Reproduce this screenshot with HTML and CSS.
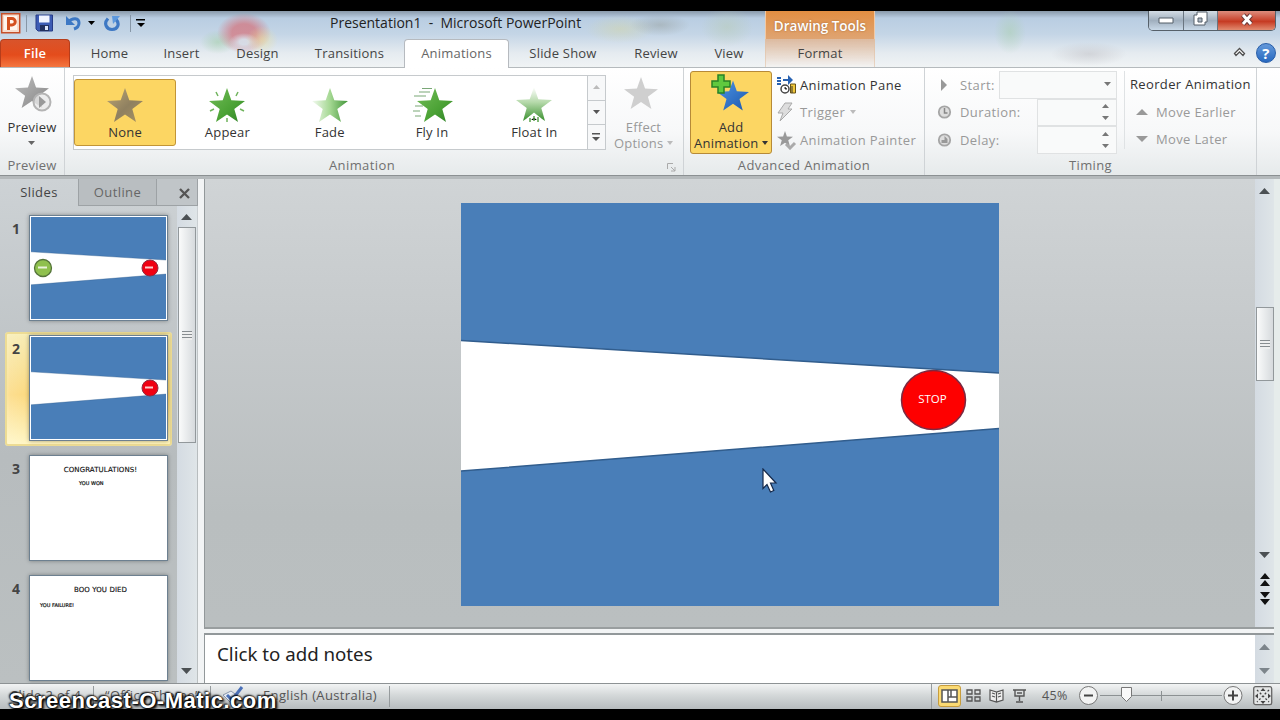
FILE: index.html
```
<!DOCTYPE html>
<html lang="en">
    <head>
        <meta charset="UTF-8">
        <meta name="viewport" content="width=device-width, initial-scale=1.0">
        <title>Presentation1 - Microsoft PowerPoint</title>
        <link rel="stylesheet" href="styles.css">
    </head>
    <body>
        <!-- Shared gradients and shapes -->
        <svg class="defs" width="0" height="0">
            <defs>
                <linearGradient id="gray" x1="0" y1="0" x2="1" y2="1"><stop offset="0" stop-color="#bdbdbd"/><stop offset="1" stop-color="#858585"/></linearGradient>
                <linearGradient id="brown" x1="0" y1="0" x2="1" y2="1"><stop offset="0" stop-color="#bfa873"/><stop offset=".55" stop-color="#8f8060"/><stop offset="1" stop-color="#aa9461"/></linearGradient>
                <linearGradient id="green" x1="0" y1="0" x2="1" y2="1"><stop offset="0" stop-color="#74bd59"/><stop offset=".6" stop-color="#4ba235"/><stop offset="1" stop-color="#2f8128"/></linearGradient>
                <linearGradient id="fade" x1="0" y1="0" x2="1" y2="0"><stop offset="0" stop-color="#f3faf0"/><stop offset=".5" stop-color="#a5d893"/><stop offset="1" stop-color="#43963a"/></linearGradient>
                <linearGradient id="float" x1="0" y1="0" x2="0" y2="1"><stop offset="0" stop-color="#fff"/><stop offset=".45" stop-color="#b5d9aa"/><stop offset="1" stop-color="#3b9130"/></linearGradient>
                <linearGradient id="blue" x1="0" y1="0" x2="1" y2="1"><stop offset="0" stop-color="#4d95e6"/><stop offset="1" stop-color="#1d58ad"/></linearGradient>
                <symbol id="star" viewBox="0 0 36 34"><path d="M18 0l4.3 12.3L36 13 25.3 21 29 34l-11-7.6L7 34l3.7-13L0 13l13.700-.7z"/></symbol>
                <symbol id="slide-art" viewBox="0 0 538 403" preserveAspectRatio="none">
                    <path fill="#497eb8" d="M0 0h538v403H0z"/>
                    <path fill="#fff" d="M0 137.500L538 170v55.500L0 268z"/>
                    <path fill="none" stroke="#315d8d" stroke-width="1.500" d="M0 137.500L538 170M0 268l538-42.500"/>
                </symbol>
            </defs>
        </svg>

        <div class="application">
            <div class="header">
                <div class="titlebar">
                    <div class="quick-access">
                        <svg class="logo" width="21" height="21" viewBox="-1 0 21 21"><path fill="#f6dccd" stroke="#c6502a" stroke-width="1.500" d="M.700.700h18v19H.700z"/><path fill="#fff5ee" d="M3 3h13v14H3z"/><path fill="none" stroke="#d4501f" stroke-width="3" d="M7.500 17V5.500H11a3 3 0 010 6.500H8"/></svg>
                        <span class="bar"></span>
                        <svg class="save" width="19" height="18" viewBox="0 0 19 18"><path fill="#3c5cb4" stroke="#263c87" d="M1 1h16.500v16H3l-2-2z"/><path fill="#f1f5ff" d="M4 1.500h10.500v7H4z"/><path fill="#22305e" d="M5 11h9v6H5z"/><path fill="#dbe4f7" d="M10 12h3v4h-3z"/></svg>
                        <svg class="undo" width="17" height="16" viewBox="0 0 17 16"><path fill="none" stroke="#3d78c4" stroke-width="3" d="M3 7c5-5 11-4 11 1 0 3-2 5-5 6"/><path fill="#3d78c4" d="M1 1v9h9z"/></svg>
                        <svg class="caret" width="8" height="5"><path d="M0 0h7L3.500 4z"/></svg>
                        <svg class="redo" width="17" height="17" viewBox="0 0 17 17"><path fill="none" stroke="#3d78c4" stroke-width="3.200" d="M4 3.500C-1 9 3 14.500 8 14.500c6 0 8-6 4-10"/><path fill="#5c98dd" d="M8 1h8L9 9z"/></svg>
                        <span class="bar"></span>
                        <svg class="more" width="10" height="8"><path d="M0 0h9v1.500H0zM1 4h8L5 8z"/></svg>
                    </div>
                    <div class="window-title">Presentation1&nbsp; -&nbsp; Microsoft PowerPoint</div>
                    <div class="tool-title">Drawing Tools</div>
                    <div class="window-buttons">
                        <span class="minimize"><svg width="17" height="8"><path fill="#fff" stroke="#555e69" d="M1 1h14v5H1z"/></svg></span>
                        <span class="restore"><svg width="16" height="16"><path fill="#fff" stroke="#555e69" d="M4 1h10v10h-2v3H1V4h3z"/><path fill="#aeb9c5" stroke="#555e69" d="M5 7h4v4H5z"/></svg></span>
                        <span class="close"><svg width="14" height="13" viewBox="0 0 14 13"><path stroke="#6b3a38" stroke-width="5" d="M3 2l8 9M11 2l-8 9"/><path stroke="#fff" stroke-width="3" d="M3 2l8 9M11 2l-8 9"/></svg></span>
                    </div>
                </div>
                <div class="tabs">
                    <div class="tab file">File</div>
                    <div class="tab home">Home</div>
                    <div class="tab insert">Insert</div>
                    <div class="tab design">Design</div>
                    <div class="tab transitions">Transitions</div>
                    <div class="tab active">Animations</div>
                    <div class="tab slideshow">Slide Show</div>
                    <div class="tab review">Review</div>
                    <div class="tab view">View</div>
                    <div class="tab format">Format</div>
                    <div class="help">
                        <svg width="13" height="11"><path fill="#fff" stroke="#505050" stroke-width="1.300" d="M1.500 6.500l5-5 5 5-1.500 2-3.500-3.500L3 8.500z"/></svg>
                        <span class="help-icon">?</span>
                    </div>
                </div>
            </div>

            <div class="ribbon">
                <div class="group group-preview">
                    <div class="group-content">
                        <div class="big-button">
                            <svg width="42" height="38" viewBox="0 0 42 38"><use href="#star" x="4" y="0" width="34" height="34" fill="url(#gray)"/><circle cx="31" cy="27" r="8.500" fill="#e9e9e9" fill-opacity=".8" stroke="#b4b4b4" stroke-width="2"/><path fill="#999" d="M28 21l7 6-7 6z"/></svg>
                            <span>Preview</span>
                            <svg class="drop" width="8" height="5"><path d="M0 0h7L3.500 4z"/></svg>
                        </div>
                    </div>
                    <div class="group-label">Preview</div>
                </div>

                <div class="group group-animation">
                    <div class="group-content">
                        <div class="gallery">
                            <div class="effect selected"><svg width="52" height="38"><use href="#star" x="8" y="2" width="36" height="34" fill="url(#brown)"/></svg>None</div>
                            <div class="effect"><svg width="52" height="38"><use href="#star" x="8" y="2" width="36" height="34" fill="url(#green)"/><path stroke="#70b45d" stroke-width="1.500" d="M15 6l2 4M37 6l-2 4M9 25l4-2M43 25l-4-2M26 32v4"/></svg>Appear</div>
                            <div class="effect"><svg width="52" height="38"><use href="#star" x="8" y="2" width="36" height="34" fill="url(#fade)"/></svg>Fade</div>
                            <div class="effect"><svg width="52" height="38"><use href="#star" x="11" y="2" width="36" height="34" fill="url(#green)"/><path stroke="#7aa777" stroke-width="1.200" d="M16 2.500h10M13 6h11M8 10h12M9 20h8M7 25h7M9 30h6"/></svg>Fly In</div>
                            <div class="effect"><svg width="52" height="38"><use href="#star" x="8" y="1" width="36" height="34" fill="url(#float)"/><path stroke="#fff" stroke-width="4" d="M20 34l6-5 6 5"/><path stroke="#5ba34d" stroke-width="1.500" d="M22 32v4M26 30v5M30 31v5"/></svg>Float In</div>
                            <div class="gallery-scroll">
                                <span class="disabled"><svg width="8" height="5"><path d="M0 4h7L3.500 0z"/></svg></span>
                                <span><svg width="8" height="5"><path d="M0 0h7L3.500 4z"/></svg></span>
                                <span><svg width="9" height="9"><path d="M0 0h8v1.500H0zM0 4h8L4 8z"/></svg></span>
                            </div>
                        </div>
                        <div class="big-button effect-options">
                            <svg width="36" height="34" fill="#cfcfcf"><use href="#star" width="34" height="34"/></svg>
                            <span>Effect<br>Options <i class="arrow"></i></span>
                        </div>
                    </div>
                    <div class="group-label">Animation
                        <svg class="launcher" width="9" height="9"><path fill="none" stroke="#aaa" d="M.500 6V.500H6M4 4l4 4M8 4v4H4"/></svg>
                    </div>
                </div>

                <div class="group group-advanced">
                    <div class="group-content">
                        <div class="big-button add-animation">
                            <svg width="40" height="40"><use href="#star" x="6" y="5" width="32" height="33" fill="url(#blue)"/><path fill="#5fc93e" stroke="#278226" stroke-width="1.500" d="M7 1h6v6h6v6h-6v6H7v-6H1V7h6z"/></svg>
                            <span>Add<br>Animation <i class="arrow"></i></span>
                        </div>
                        <div class="commands">
                            <div class="command">
                                <svg width="20" height="20"><path stroke="#2862b2" stroke-width="2" d="M0 3h4M0 6h4M0 9h4M6 5h8"/><path fill="#2862b2" d="M11 0l5 5-5 5z"/><circle cx="8" cy="14" r="4" fill="#fff" stroke="#444" stroke-width="1.500"/><path fill="#f1c83a" stroke="#695314" d="M13.500 9h5v9h-5z"/><path stroke="#333" d="M8 12v2h2M15 18v-7"/></svg>
                                Animation Pane
                            </div>
                            <div class="command disabled">
                                <svg width="20" height="20"><path fill="#ddd" stroke="#aaa" d="M8 1h7l-4 6h4L3 19l3-8H1z"/></svg>
                                Trigger <i class="arrow"></i>
                            </div>
                            <div class="command disabled">
                                <svg width="20" height="20"><use href="#star" width="16" height="17" fill="#999"/><path fill="none" stroke="#aaa" stroke-width="3" d="M9 14l4 4 5-5"/></svg>
                                Animation Painter
                            </div>
                        </div>
                    </div>
                    <div class="group-label">Advanced Animation</div>
                </div>

                <div class="group group-timing">
                    <div class="group-content">
                        <div class="timing">
                            <div class="timing-row"><svg width="23" height="16"><path fill="#999" d="M4 2l6 6-6 6z"/></svg><span>Start:</span><div class="field start"><svg width="8" height="5"><path d="M0 0h7L3.500 4z"/></svg></div></div>
                            <div class="timing-row"><svg width="23" height="16"><circle cx="7.500" cy="8" r="5.700" fill="#ddd" stroke="#a5a5a5" stroke-width="1.800"/><path fill="none" stroke="#888" stroke-width="1.500" d="M7.500 4v5h3"/></svg><span>Duration:</span><div class="field spin"><svg width="8" height="16"><path d="M0 4h7L3.500 0zM0 12h7L3.500 16z"/></svg></div></div>
                            <div class="timing-row"><svg width="23" height="16"><circle cx="7.500" cy="8" r="5.700" fill="#ddd" stroke="#a5a5a5" stroke-width="1.800"/><path fill="#999" d="M7.500 4v4h-3v3h6V7z"/></svg><span>Delay:</span><div class="field spin"><svg width="8" height="16"><path d="M0 4h7L3.500 0zM0 12h7L3.500 16z"/></svg></div></div>
                        </div>
                        <div class="reorder">
                            <div>Reorder Animation</div>
                            <div class="disabled"><svg width="12" height="7"><path d="M0 6h12L6 0z"/></svg>Move Earlier</div>
                            <div class="disabled"><svg width="12" height="7"><path d="M0 0h12L6 6z"/></svg>Move Later</div>
                        </div>
                    </div>
                    <div class="group-label">Timing</div>
                </div>
            </div>

            <div class="workspace">
                <div class="side-panel">
                    <div class="panel-tabs">
                        <div class="panel-tab current">Slides</div>
                        <div class="panel-tab outline">Outline</div>
                        <div class="panel-close"><svg width="11" height="11"><path stroke="#555" stroke-width="2.300" d="M1 1l9 9M10 1l-9 9"/></svg></div>
                    </div>
                    <div class="panel-body">
                        <div class="thumbs">
                            <div class="thumb">
                                <b>1</b>
                                <div class="thumb-slide"><svg width="135" height="102"><use href="#slide-art" width="135" height="102"/><circle cx="12" cy="51" r="8.500" fill="#8fc04e" stroke="#54733a" stroke-width="1.300"/><circle cx="119" cy="51" r="8" fill="#f00012" stroke="#8c2c44"/><path stroke="#fff" stroke-width="2" stroke-opacity=".8" d="M7 50.500h9M114 50.500h8"/></svg></div>
                            </div>
                            <div class="thumb selected">
                                <b>2</b>
                                <div class="thumb-slide"><svg width="135" height="102"><use href="#slide-art" width="135" height="102"/><circle cx="119" cy="51" r="8" fill="#f00012" stroke="#8c2c44"/><path stroke="#fff" stroke-width="2" stroke-opacity=".8" d="M114 50.500h8"/></svg></div>
                            </div>
                            <div class="thumb">
                                <b>3</b>
                                <div class="thumb-slide won"><h2>CONGRATULATIONS!</h2><p>YOU WON</p></div>
                            </div>
                            <div class="thumb">
                                <b>4</b>
                                <div class="thumb-slide died"><h2>BOO YOU DIED</h2><p>YOU FAILURE!</p></div>
                            </div>
                        </div>
                        <div class="scrollbar panel-scroll">
                            <svg width="13" height="7"><path d="M1 6h11L6.500 0z"/></svg>
                            <div class="scroll-thumb"><i class="grip"></i></div>
                            <svg class="last" width="13" height="7"><path d="M1 0h11L6.500 6z"/></svg>
                        </div>
                    </div>
                </div>

                <div class="editor">
                    <div class="stage">
                        <div class="canvas">
                            <div class="slide">
                                <svg width="538" height="403"><use href="#slide-art" width="538" height="403"/><ellipse cx="472.500" cy="197" rx="32" ry="29.500" fill="#fe0000" stroke="#7c2941" stroke-width="1.500"/></svg>
                                <span class="stop">STOP</span>
                            </div>
                        </div>
                        <div class="scrollbar stage-scroll">
                            <svg width="13" height="7"><path d="M1 6h11L6.500 0z"/></svg>
                            <div class="scroll-thumb"><i class="grip"></i></div>
                            <svg class="last" width="13" height="7"><path d="M1 0h11L6.500 6z"/></svg>
                            <svg class="jump" width="13" height="34"><path fill="#111" d="M2 6h10L7 0zM2 13h10L7 7zM2 19h10l-5 6zM2 26h10l-5 6z"/></svg>
                        </div>
                    </div>
                    <div class="notes">
                        <div class="notes-text">Click to add notes</div>
                        <div class="scrollbar notes-scroll">
                            <svg width="13" height="7"><path d="M1 6h11L6.500 0z"/></svg>
                            <svg class="last" width="13" height="7"><path d="M1 0h11L6.500 6z"/></svg>
                        </div>
                    </div>
                </div>
            </div>

            <div class="statusbar">
                <div class="status slide-count">Slide 2 of 4</div>
                <div class="status theme">“Office Theme”</div>
                <div class="status language"><svg width="24" height="20"><path fill="#e8edf4" stroke="#8895ab" d="M2 9l8-4 8 6-7 7z"/><path fill="none" stroke="#4a70b8" stroke-width="3" d="M6 9l5 5L21 1"/></svg>English (Australia)</div>
                <div class="views">
                    <span class="current"><svg width="17" height="14"><path fill="#fff" stroke="#555" stroke-width="1.500" d="M1 1h15v12H1zM7 1v12M10 1v7M7 8h9"/></svg></span>
                    <svg width="15" height="14"><path fill="none" stroke="#555" stroke-width="1.300" d="M1 1h5v4H1zM9 1h5v4H9zM1 8h5v4H1zM9 8h5v4H9z"/></svg>
                    <svg width="15" height="14"><path fill="#eee" stroke="#555" stroke-width="1.200" d="M7.500 3L1 1v10l6.500 2L14 11V1zM7.500 3v10M3 4l3 1M3 7l3 1M12 4L9 5M12 7L9 8"/></svg>
                    <svg width="15" height="14"><path fill="none" stroke="#555" stroke-width="1.400" d="M1 1h13M3 1v6h9V1M7.500 7v5M4 13h7M5 4h5"/></svg>
                </div>
                <div class="zoom">
                    <span class="percent">45%</span>
                    <svg width="166" height="22"><path stroke="#8c9193" d="M22 10.500h122M83.500 6v10"/><circle cx="10.500" cy="10.500" r="9" fill="#f2f3f3" stroke="#777"/><path stroke="#444" stroke-width="2" d="M6 10.500h9"/><path fill="#f9f9f9" stroke="#777" d="M43.500 2.500h10v9l-5 5-5-5z"/><circle cx="155" cy="10.500" r="9" fill="#f2f3f3" stroke="#777"/><path stroke="#444" stroke-width="2" d="M150 10.500h10M155 5.500v10"/></svg>
                    <svg class="fit" width="20" height="20"><rect x=".7" y=".7" width="18" height="18" rx="2" fill="#e3e5e5" stroke="#666" stroke-width="1.300"/><path fill="#444" d="M10 2l2.500 3h-5zM10 18l2.500-3h-5zM2 10l3-2.500v5zM18 10l-3-2.500v5z"/><path stroke="#444" stroke-width="1.300" stroke-dasharray="2 2" d="M4 4l12 12M16 4L4 16"/></svg>
                </div>
            </div>

            <div class="watermark">Screencast-O-Matic.com</div>
            <svg class="cursor" width="16" height="26" viewBox="0 0 16 26"><path fill="#fff" stroke="#15294a" stroke-width="1.200" d="M1 1v19.500l4-4L8.500 24l3.300-1.500L8.500 15H14z"/></svg>
        </div>
    </body>
</html>
```
FILE: styles.css
```
*{
    box-sizing: border-box;
}
body{
    margin: 0;
    background-color: #000;
    font-family: "Open Sans", "Noto Sans", sans-serif;
    font-size: 13px;
    color: #333;
}
svg{
    display: block;
    flex: none;
}
.defs{
    position: absolute;
}
.application{
    position: relative;
    display: flex;
    flex-direction: column;
    width: 1280px;
    height: 720px;
    padding: 11px 0;
    overflow: hidden;
    white-space: nowrap;
}

/* Title bar and tabs */
.header{
    height: 57px;
    background:
        radial-gradient(ellipse 16px 14px at 262px 29px, rgba(240,225,150,.5) 10%, transparent 100%),
        radial-gradient(ellipse 15px 9px at 244px 31px, rgba(215,226,236,.9) 30%, transparent 100%),
        radial-gradient(ellipse 27px 20px at 244px 22px, rgba(214,104,112,.65) 45%, transparent 100%),
        radial-gradient(ellipse 18px 12px at 218px 31px, rgba(164,207,170,.6), transparent),
        radial-gradient(ellipse 30px 11px at 660px 14px, rgba(134,139,128,.35), transparent),
        radial-gradient(ellipse 34px 14px at 620px 18px, rgba(214,214,160,.45), transparent),
        radial-gradient(ellipse 26px 20px at 727px 16px, rgba(183,203,180,.5), transparent),
        radial-gradient(ellipse 16px 22px at 1010px 21px, rgba(169,207,172,.5), transparent),
        radial-gradient(ellipse 38px 12px at 1089px 43px, rgba(190,190,195,.5), transparent),
        linear-gradient(#8999aa, #b9cde2 7px, #c4d5e6 23px, #e5ebf0 42px, #f1f4f5 57px);
    border-bottom: 1px solid #b5babd;
}
.titlebar{
    display: flex;
    height: 28px;
}
.quick-access{
    display: flex;
    width: 150px;
    height: 24px;
    align-items: center;
}
.bar{
    width: 1px;
    height: 17px;
    background-color: #8797a7;
}
.logo{
    margin-right: 5px;
}
.save{
    margin-left: 8px;
}
.undo{
    margin-left: 11px;
}
.caret{
    margin-left: 6px;
}
.redo{
    margin: 0 9px 0 8px;
}
.more{
    margin-left: 5px;
}
.window-title{
    width: 615px;
    padding: 2px 0 0 180px;
    font-size: 14px;
    color: #222;
}
.tool-title{
    width: 110px;
    padding-top: 6px;
    text-align: center;
    color: #fff;
    font-size: 13.500px;
    font-weight: 600;
    text-shadow: 0 0 2px #9c6336;
    background: linear-gradient(#e28e42, #dfa472);
    border: 1px solid #f1c9a5;
    border-width: 0 1px;
}
.window-buttons{
    display: flex;
    width: 128px;
    height: 20px;
    margin-left: 273px;
    border: 1px solid #56606a;
    border-top: 0;
    border-radius: 0 0 5px 5px;
    overflow: hidden;
}
.window-buttons span{
    display: flex;
    width: 35px;
    justify-content: center;
    align-items: center;
    background: linear-gradient(#d3dce4, #a0afbe 50%, #c9d9e8);
    border-right: 1px solid #6a7580;
}
.window-buttons .restore{
    width: 34px;
    padding-bottom: 4px;
}
.window-buttons .close{
    flex: 1;
    padding-bottom: 3px;
    background: linear-gradient(#dd8d7d, #cb4a34 45%, #c63b23 55%, #e28b70);
    border-right: 0;
}
.tabs{
    display: flex;
    height: 29px;
    letter-spacing: .2px;
}
.tab{
    height: 28px;
    padding-top: 5px;
    text-align: center;
    color: #444;
}
.file{
    width: 70px;
    color: #fff;
    font-weight: 600;
    background: linear-gradient(#d9542b, #e44c1c 55%, #f47640);
    border: 1px solid #b63d1b;
    border-bottom: 0;
    border-radius: 4px 4px 0 0;
    padding-top: 4px;
}
.home{ width: 79px; }
.insert{ width: 65px; }
.design{ width: 87px; }
.transitions{ width: 97px; }
.tab.active{
    width: 105px;
    height: 30px;
    margin: 0 2px 0 6px;
    background-color: #fff;
    border: 1px solid #b6babf;
    border-bottom: 0;
    border-radius: 4px 4px 0 0;
    padding-top: 4px;
    color: #666;
}
.slideshow{ width: 104px; }
.review{ width: 82px; }
.view{ width: 64px; }
.format{
    width: 110px;
    margin-left: 4px;
    background: linear-gradient(rgba(225,178,141,.8), rgba(248,244,240,.4));
    border: solid rgba(225,193,165,.6);
    border-width: 0 1px;
}
.help{
    display: flex;
    align-items: center;
    margin-left: auto;
    padding: 0 4px 2px 0;
}
.help-icon{
    width: 20px;
    height: 20px;
    margin-left: 10px;
    border: 1px solid #275da8;
    border-radius: 50%;
    background: linear-gradient(#6599da, #2869c0);
    color: #fff;
    font-size: 15px;
    line-height: 18px;
    font-weight: bold;
    text-align: center;
}

/* Ribbon */
.ribbon{
    display: flex;
    height: 108px;
    background: linear-gradient(#fff, #f7f8f9 60%, #e6eaeb);
    border-bottom: 1px solid #8b9092;
    letter-spacing: .2px;
}
.group{
    display: flex;
    flex-direction: column;
    border-right: 1px solid #cfd3d6;
}
.group-preview{ width: 65px; }
.group-animation{ width: 619px; }
.group-advanced{ width: 241px; }
.group-timing{ width: 332px; }
.group-content{
    display: flex;
    height: 87px;
}
.group-label{
    position: relative;
    text-align: center;
    line-height: 20px;
    color: #707070;
    letter-spacing: .4px;
}
.group-preview .group-label{
    letter-spacing: .2px;
}
.group-animation .group-label{
    padding-right: 24px;
}
.launcher{
    position: absolute;
    right: 7px;
    top: 8px;
}
.big-button{
    display: flex;
    flex-direction: column;
    align-items: center;
    text-align: center;
    line-height: 16px;
}
.group-preview .big-button{
    width: 64px;
    padding-top: 7px;
}
.group-preview .big-button span{
    margin-top: 6px;
}
.drop{
    margin-top: 6px;
    fill: #666;
}
.gallery{
    display: flex;
    width: 533px;
    height: 75px;
    margin: 7px 0 0 8px;
    background-color: #fff;
    border: 1px solid #c6cacd;
}
.effect{
    display: flex;
    flex-direction: column;
    align-items: center;
    width: 102.300px;
    height: 67px;
    padding-top: 6px;
    margin-top: 3px;
    line-height: 17px;
    border: 1px solid transparent;
}
.effect.selected{
    background-color: #fcd663;
    border-color: #c29537;
    border-radius: 3px;
}
.gallery-scroll{
    display: flex;
    flex-direction: column;
    width: 18px;
    margin-left: auto;
    border-left: 1px solid #c6cacd;
}
.gallery-scroll span{
    display: flex;
    flex: 1;
    align-items: center;
    justify-content: center;
    background-color: #f7f8f9;
    fill: #555;
}
.gallery-scroll span + span{
    border-top: 1px solid #c6cacd;
}
.gallery-scroll .disabled{
    fill: #bbb;
}
.effect-options{
    width: 77px;
    padding: 8px 2px 0 0;
    color: #999;
}
.effect-options svg{
    margin-left: -3px;
}
.effect-options span{
    margin-top: 9px;
}
.arrow{
    display: inline-block;
    width: 0;
    height: 0;
    border: 3px solid transparent;
    border-top: 4px solid;
    border-bottom: 0;
    vertical-align: 3px;
}
.disabled .arrow, .effect-options .arrow{
    border-top-color: #bbb;
}
.add-animation{
    width: 82px;
    height: 83px;
    margin: 3px 0 0 6px;
    padding-top: 2px;
    background-color: #fcd663;
    border: 1px solid #b68a38;
    border-radius: 3px;
}
.add-animation span{
    margin: 5px -3px 0;
}
.commands{
    padding: 3px 0 0 5px;
    letter-spacing: .4px;
}
.command{
    display: flex;
    gap: 3px;
    align-items: center;
    height: 27.500px;
}
.command .arrow{
    margin-left: 2px;
}
.disabled{
    color: #999;
    fill: #999;
}
.timing{
    width: 199px;
    margin-top: 3px;
    padding-left: 12px;
    padding-right: 7px;
    color: #999;
    letter-spacing: .4px;
}
.timing-row{
    display: flex;
    align-items: center;
    height: 27.500px;
}
.field{
    display: flex;
    align-items: center;
    justify-content: flex-end;
    height: 27.500px;
    margin-left: auto;
    padding-right: 4px;
    border: 1px solid #e0e2e3;
    background-color: #f9fafa;
    fill: #777;
}
.start{ width: 118px; }
.spin{
    width: 80px;
    padding-right: 6px;
}
.reorder{
    margin-top: 3px;
    padding-left: 5px;
    line-height: 27.500px;
    border-left: 1px solid #dfe2e4;
    height: 78px;
    letter-spacing: .35px;
}
.reorder div{
    display: flex;
    align-items: center;
    height: 27.500px;
}
.reorder svg{
    margin: 0 8px 0 6px;
}

/* Slides panel */
.workspace{
    display: flex;
    height: 507px;
    border-top: 3px solid #b4b9bb;
}
.side-panel{
    width: 198px;
    background: linear-gradient(#cdd2d5, #b7bcbe 55%, #bbc0c1);
}
.panel-tabs{
    display: flex;
    height: 27px;
    line-height: 27px;
    color: #666;
    letter-spacing: .4px;
}
.panel-tab{
    width: 78px;
    text-align: center;
}
.panel-tab.current{
    color: #444;
}
.panel-tab.outline{
    width: 79px;
    background-color: #b9bec1;
    border: solid #9da2a5;
    border-width: 0 1px 1px;
}
.panel-close{
    flex: 1;
    padding: 9px 0 0 22px;
    background-color: #c0c5c8;
    border: solid #9da2a5;
    border-width: 0 1px 1px 0;
}
.panel-body{
    display: flex;
    height: 477px;
    overflow: hidden;
}
.thumbs{
    width: 177px;
    padding: 6px 0 0 5px;
}
.thumb{
    display: flex;
    width: 167px;
    height: 114px;
    margin-bottom: 6px;
    padding: 2px;
}
.thumb b{
    width: 22px;
    padding: 5px 0 0 5px;
    font-size: 14px;
    color: #444;
}
.thumb.selected{
    border-radius: 3px;
    background: linear-gradient(90deg, rgba(255,255,255,.3), transparent 30%), linear-gradient(#f5e9a7, #fbd267 55%, #fff5bc);
    box-shadow: inset 0 0 0 2px #eddc94, inset 0 0 5px #fff7c9;
}
.thumb-slide{
    width: 139px;
    height: 106px;
    margin-top: 1px;
    background-color: #fff;
    border: 1px solid #6d8090;
    padding: 1px;
    box-shadow: 0 0 4px rgba(0,0,0,.35);
    flex: none;
    color: #111;
}
.thumb-slide h2, .thumb-slide p{
    margin: 0;
    font-family: "DejaVu Sans", sans-serif;
}
.thumb-slide h2{
    padding: 8px 0 0 4px;
    font-size: 7px;
    line-height: 11px;
    font-weight: normal;
    text-align: center;
    letter-spacing: .1px;
    -webkit-text-stroke: .15px #111;
}
.thumb-slide p{
    padding: 3px 0 0 48px;
    font-size: 5px;
    line-height: 8px;
    -webkit-text-stroke: .2px #111;
}
.died p{
    padding: 5px 0 0 9px;
}

/* Scroll bars */
.scrollbar{
    display: flex;
    flex-direction: column;
    align-items: center;
    background: linear-gradient(90deg, #d4dbe2, #dfe5e8);
    fill: #4b5053;
}
.scroll-thumb{
    display: flex;
    align-items: center;
    justify-content: center;
    width: 18px;
    border: 1px solid #92989b;
    background: linear-gradient(90deg, #fafbfb, #d6dadd);
}
.grip{
    width: 10px;
    height: 9px;
    background: repeating-linear-gradient(#888d90 0 1px, #eee 1px 3px);
}
.last{
    margin-top: auto;
}
.panel-scroll{
    width: 20px;
    padding: 8px 1px 8px 0;
}
.panel-scroll .scroll-thumb{
    height: 216px;
    margin-top: 6px;
}

/* Slide editor */
.editor{
    flex: 1;
    border-left: 6px solid #f2f4f5;
    border-right: 6px solid #e6eceb;
    box-shadow: inset 1px 0 #8b9193, inset 2px 0 #8b9193;
}
.stage{
    display: flex;
    height: 450px;
    border-left: 1px solid #92989a;
    border-bottom: 2px solid #999e9f;
}
.canvas{
    width: 1050px;
    padding: 24px 0 0 256px;
    background: linear-gradient(#d0d4d6, #c5c9cb 35%, #b9bebf 75%, #babfc0);
}
.slide{
    position: relative;
    width: 538px;
    height: 403px;
}
/* caption lies over the red circle */
.stop{
    position: absolute;
    left: 439px;
    top: 187px;
    width: 65px;
    text-align: center;
    line-height: 17px;
    font-size: 11.500px;
    color: #fff;
}
.stage-scroll{
    flex: 1;
    padding-top: 9px;
}
.stage-scroll .scroll-thumb{
    height: 74px;
    margin-top: 112px;
}
.jump{
    margin: 14px 0 20px;
}
.notes{
    display: flex;
    height: 54px;
    border-top: 4px solid #f2f4f5;
}
.notes-text{
    width: 1051px;
    padding: 6px 0 0 12px;
    border: solid #92989a;
    border-width: 2px 0 0 1px;
    background-color: #fff;
    font-family: "Noto Sans", sans-serif;
    font-size: 18.700px;
    line-height: 25px;
    color: #222;
}
.notes-scroll{
    flex: 1;
    padding: 9px 0 8px;
    border-top: 2px solid #92989a;
    fill: #7d858b;
}

/* Status bar */
.statusbar{
    display: flex;
    height: 26px;
    border-top: 1px solid #8d9294;
    background: linear-gradient(#f2f4f4, #d4d8d9 45%, #b7bcbe);
    color: #555;
    letter-spacing: .35px;
}
.status{
    margin: 2px 0;
    line-height: 19px;
    border-right: 1px solid #969b9d;
}
.slide-count{
    width: 94px;
    padding-left: 11px;
}
.theme{
    width: 117px;
    padding-left: 11px;
}
.language{
    display: flex;
    width: 179px;
    padding-left: 10px;
    gap: 18px;
}
.views{
    display: flex;
    align-items: center;
    width: 96px;
    margin-left: 541px;
    border-left: 1px solid #969b9d;
    padding: 0 0 2px 6px;
    gap: 8px;
}
.views .current{
    display: flex;
    align-items: center;
    justify-content: center;
    flex: none;
    width: 23px;
    height: 22px;
    margin-right: -3px;
    background-color: #fbda73;
    border: 1px solid #c79d3e;
    border-radius: 3px;
}
.zoom{
    display: flex;
    align-items: center;
    padding: 0 0 2px 15px;
}
.percent{
    width: 36px;
    font-size: 12.500px;
}
.fit{
    margin-left: 9px;
}

/* Recorder mark and mouse pointer, both on top of the window */
.watermark{
    position: absolute;
    left: 9px;
    bottom: 6px;
    font: bold 22px/26px "Liberation Sans", sans-serif;
    letter-spacing: .5px;
    color: #fff;
    text-shadow: 0 0 2px #000, 1px 1px 2px #000, -1px -1px 2px #000, 2px 2px 3px #000;
}
.cursor{
    position: absolute;
    left: 762px;
    top: 468px;
}
```
